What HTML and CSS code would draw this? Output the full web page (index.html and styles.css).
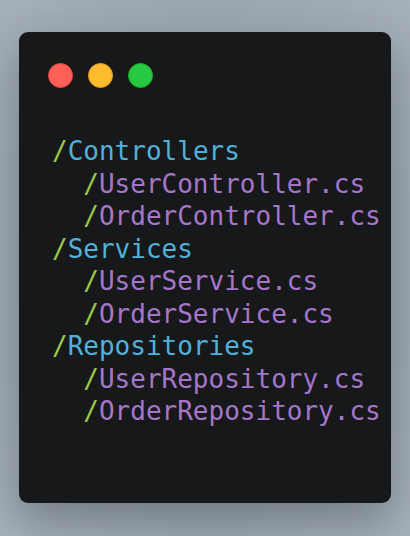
FILE: index.html
```html
<!DOCTYPE html>
<html>
<head>
<meta charset="utf-8">
<link rel="stylesheet" href="styles.css">
</head>
<body>
<div class="window">
  <div class="dots">
    <span class="dot red"></span>
    <span class="dot yellow"></span>
    <span class="dot green"></span>
  </div>
  <div class="tree">
    <div class="line"><span class="sl">/</span><span class="dir">Controllers</span></div>
    <div class="line sub"><span class="sl">/</span><span class="file">UserController.cs</span></div>
    <div class="line sub"><span class="sl">/</span><span class="file">OrderController.cs</span></div>
    <div class="line"><span class="sl">/</span><span class="dir">Services</span></div>
    <div class="line sub"><span class="sl">/</span><span class="file">UserService.cs</span></div>
    <div class="line sub"><span class="sl">/</span><span class="file">OrderService.cs</span></div>
    <div class="line"><span class="sl">/</span><span class="dir">Repositories</span></div>
    <div class="line sub"><span class="sl">/</span><span class="file">UserRepository.cs</span></div>
    <div class="line sub"><span class="sl">/</span><span class="file">OrderRepository.cs</span></div>
  </div>
</div>
</body>
</html>
```
FILE: styles.css
```css
html, body {
  margin: 0;
  padding: 0;
}
body {
  width: 410px;
  height: 536px;
  box-sizing: border-box;
  padding: 32px 19px 33px;
  background: radial-gradient(ellipse at 50% 50%, #8d969f 0%, #9aa4ae 60%, #a6b0ba 100%);
  font-family: "DejaVu Sans Mono", monospace;
}
.window {
  height: 100%;
  box-sizing: border-box;
  background: #17181a;
  border-radius: 9px;
  padding: 31px 29px;
  box-shadow: 0 18px 40px rgba(40, 48, 56, 0.35);
}
.dots {
  display: flex;
  gap: 15px;
  height: 25px;
}
.dot {
  width: 25px;
  height: 25px;
  border-radius: 50%;
  box-sizing: border-box;
}
.red { background: #ff5f57; border: 1px solid #e2463f; }
.yellow { background: #febc2e; border: 1px solid #dea123; }
.green { background: #28c840; border: 1px solid #1aab29; }
.tree {
  margin-top: 47px;
  padding-left: 4px;
  font-size: 26px;
  line-height: 32.5px;
  white-space: nowrap;
}
.sub { padding-left: 31.3px; }
.sl { color: #9cc946; }
.dir { color: #50b2da; }
.file { color: #a676cb; }
```
